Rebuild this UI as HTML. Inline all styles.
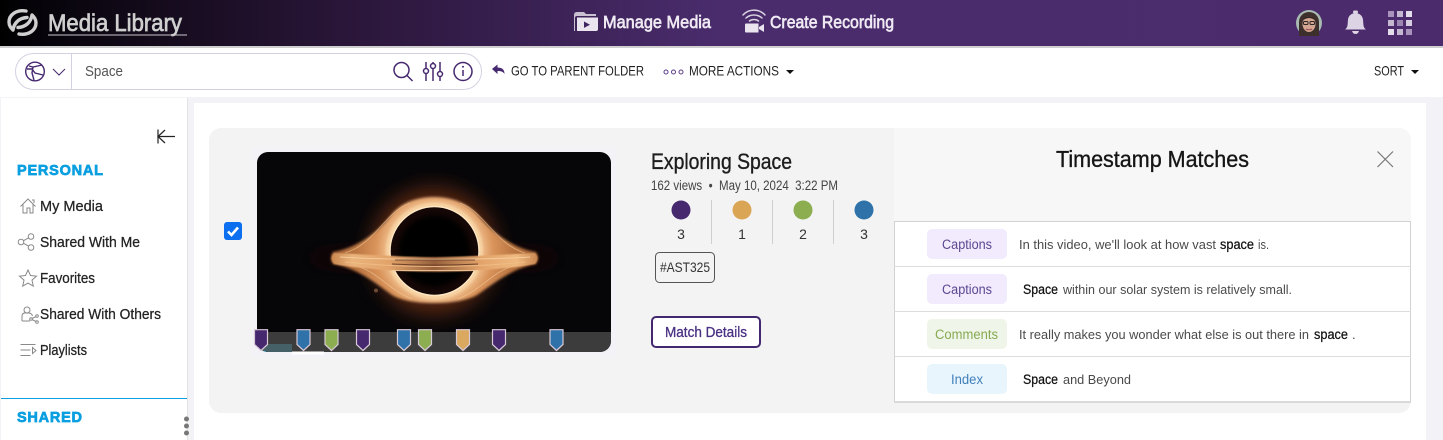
<!DOCTYPE html>
<html lang="en"><head><meta charset="utf-8"><title>Media Library</title>
<style>
html,body{margin:0;padding:0;width:1443px;height:440px;overflow:hidden;background:#f3f3f7}
svg{display:block}
text{font-family:"Liberation Sans",sans-serif;white-space:pre}
</style></head><body>
<svg xmlns="http://www.w3.org/2000/svg" width="1443" height="440" viewBox="0 0 1443 440">
<defs>
<linearGradient id="hd" x1="0" x2="1" y1="0" y2="0"><stop offset="0" stop-color="#000"/><stop offset=".02" stop-color="#050308"/><stop offset=".24" stop-color="#2a1639"/><stop offset=".5" stop-color="#4a2c6d"/><stop offset="1" stop-color="#4b2b6c"/></linearGradient>
<clipPath id="th"><rect x="257" y="152" width="354" height="200" rx="11"/></clipPath>
<filter id="b1" x="-30%" y="-30%" width="160%" height="160%"><feGaussianBlur stdDeviation="1.300"/></filter>
<filter id="b05" x="-10%" y="-50%" width="120%" height="200%"><feGaussianBlur stdDeviation=".6"/></filter>
<filter id="b2" x="-30%" y="-50%" width="160%" height="200%"><feGaussianBlur stdDeviation="3"/></filter>
<filter id="b8" x="-50%" y="-50%" width="200%" height="200%"><feGaussianBlur stdDeviation="10"/></filter>
<linearGradient id="disk" x1="0" x2="1" y1="0" y2="0"><stop offset="0" stop-color="#c98750"/><stop offset=".1" stop-color="#eab47c"/><stop offset=".28" stop-color="#e2a36a"/><stop offset=".5" stop-color="#96603c"/><stop offset=".72" stop-color="#e2a36a"/><stop offset=".9" stop-color="#eeb980"/><stop offset="1" stop-color="#c98750"/></linearGradient>
<radialGradient id="halo" gradientUnits="userSpaceOnUse" cx="434.500" cy="251" r="105"><stop offset=".42" stop-color="#f5c898"/><stop offset=".56" stop-color="#d9935a"/><stop offset=".75" stop-color="#bb7642"/><stop offset="1" stop-color="#a56236"/></radialGradient>
<path id="mk" d="M-6.500-10.300H6.500V4.500L0 10.500-6.500 4.500Z" stroke="#d8c9d6" stroke-width="1.200"/>
</defs>

<!-- backgrounds -->
<rect width="1443" height="440" fill="#f3f3f7"/>
<rect width="1443" height="46" fill="url(#hd)"/>
<rect y="46" width="1443" height="2" fill="#cfcfcf"/>
<rect y="48" width="1443" height="49" fill="#fff"/>
<rect x="1" y="98" width="186" height="342" fill="#fff"/>
<rect x="187" y="98" width="1" height="342" fill="#e2e2e2"/>
<rect x="194" y="103" width="1232" height="337" fill="#fff"/>

<!-- header -->
<g fill="none" stroke="#cfcfcf" stroke-width="3.400" stroke-linecap="round" stroke-linejoin="round">
<path d="M26 11C16 9.500 9 15 9 22 9 26 11 28 13 30 14 23 19 18 27 17.500"/>
<path d="M19 34C29 35.500 36 30 36 23 36 19 34 17 32 15 31 22 26 27 18 27.500"/>
</g>
<text x="48" y="31" font-size="24" fill="#cfcfcf" stroke="#cfcfcf" stroke-width=".7" textLength="134" lengthAdjust="spacingAndGlyphs">Media Library</text>
<rect x="48" y="34.500" width="139" height="1" fill="#c9c6cc"/>

<path d="M574 31V15q0-3 3-3h7l2 2h10v2h-19q-2 0-2 2v13z" fill="#c9c1d1"/>
<path d="M577 17.500h21V29q0 2-2 2h-19z" fill="#e9e4ee"/>
<path d="M584 21.500l6 3.200-6 3.200z" fill="#3f2560"/>
<text x="603" y="28" font-size="17.500" fill="#efeaf3" stroke="#efeaf3" stroke-width=".65" textLength="108" lengthAdjust="spacingAndGlyphs">Manage Media</text>
<g fill="none" stroke="#d9d2e0" stroke-width="1.500" stroke-linecap="round">
<path d="M743 15c6-6.500 16-6.500 22 0"/><path d="M746 18c4.500-4 11.500-4 16 0"/><path d="M749.500 21c2.500-2 6.500-2 9 0"/>
</g>
<path d="M746 23.500h12.500v9H746q-1 0-1-1v-7q0-1 1-1zM759 27l5-3v8l-5-3z" fill="#e9e4ee"/>
<text x="770" y="28" font-size="17.500" fill="#efeaf3" stroke="#efeaf3" stroke-width=".65" textLength="124" lengthAdjust="spacingAndGlyphs">Create Recording</text>

<circle cx="1309" cy="23" r="13" fill="#a9bab2"/>
<path d="M1299 36V22a10 10 0 0 1 20 0v14z" fill="#3d302c"/>
<ellipse cx="1309" cy="24" rx="6.500" ry="8" fill="#d4a591"/>
<path d="M1302 21q7-6 14 0-3-5-7-5t-7 5z" fill="#2f2422"/>
<g fill="none" stroke="#2c2628" stroke-width="1"><rect x="1303.500" y="21.500" width="4.500" height="3" rx="1"/><rect x="1310" y="21.500" width="4.500" height="3" rx="1"/></g>
<path d="M1306 29q3 1.500 6 0" stroke="#9c4d55" fill="none"/>
<path d="M1345 29.500c3-2 2.500-5 3-10 .5-4 4-6.500 7.500-6.500s7 2.500 7.500 6.500c.5 5 0 8 3 10z" fill="#dcd3e4"/>
<rect x="1353" y="10.500" width="5" height="3" rx="1.500" fill="#dcd3e4"/>
<path d="M1352 31h7q-1 3-3.500 3t-3.500-3z" fill="#dcd3e4"/>
<g>
<rect x="1388" y="11" width="6" height="6" fill="#a793bb"/><rect x="1397" y="11" width="6" height="6" fill="#c4b7d0"/><rect x="1406" y="11" width="6" height="6" fill="#e4deea"/>
<rect x="1388" y="20" width="6" height="6" fill="#c4b7d0"/><rect x="1397" y="20" width="6" height="6" fill="#9a86b0"/><rect x="1406" y="20" width="6" height="6" fill="#d6cde0"/>
<rect x="1388" y="29" width="6" height="6" fill="#e4deea"/><rect x="1397" y="29" width="6" height="6" fill="#c4b7d0"/><rect x="1406" y="29" width="6" height="6" fill="#a793bb"/>
</g>

<!-- search -->
<rect x="15.500" y="53.500" width="466" height="36" rx="18" fill="#fff" stroke="#d6d1e2"/>
<rect x="71" y="54" width="1" height="35" fill="#d6d1e2"/>
<g fill="none" stroke="#46296f" stroke-width="1.400">
<circle cx="35" cy="71.500" r="9.300"/>
<path d="M42 65l-9 2-4-1M27 69l5 0 3 4 8 2M33 67l-1 6 2 7"/>
</g>
<path d="M53 69l6 6 6-6" fill="none" stroke="#46296f" stroke-width="1"/>
<text x="85" y="76" font-size="14.500" fill="#555" textLength="38" lengthAdjust="spacingAndGlyphs">Space</text>
<g fill="none" stroke="#46296f" stroke-width="1.500">
<circle cx="401.500" cy="70" r="7.500"/><path d="M407 75.500l5.500 5.500"/>
<path d="M426 62v6M426 74v7M433 62v1M433 69v12M440 62v9M440 77v4"/>
<circle cx="426" cy="71" r="2.500"/><circle cx="433" cy="66" r="2.500"/><circle cx="440" cy="74" r="2.500"/>
<circle cx="463" cy="71.500" r="9"/>
</g>
<path d="M463 70v6" stroke="#46296f" stroke-width="1.500"/><circle cx="463" cy="66.800" r="1" fill="#46296f"/>

<path d="M492 69l5.500-4.500v3c4 0 7 1.500 7 6.500-1.500-2.500-3.500-3-7-3v3z" fill="#46296f"/>
<text x="511" y="75.500" font-size="14" fill="#222" textLength="133" lengthAdjust="spacingAndGlyphs">GO TO PARENT FOLDER</text>
<g fill="none" stroke="#5c3f8c" stroke-width="1"><circle cx="666" cy="72" r="2"/><circle cx="673.500" cy="72" r="2"/><circle cx="681" cy="72" r="2"/></g>
<text x="689" y="75.500" font-size="14" fill="#222" textLength="90" lengthAdjust="spacingAndGlyphs">MORE ACTIONS</text>
<path d="M786 70h8l-4 4z" fill="#111"/>
<text x="1374" y="75.500" font-size="14" fill="#222" textLength="30" lengthAdjust="spacingAndGlyphs">SORT</text>
<path d="M1411 70h8l-4 4z" fill="#111"/>

<!-- sidebar -->
<path d="M158 129.500v14M175 136.500h-17M165 130l-7 6.500 7 6.500" fill="none" stroke="#222" stroke-width="1.200"/>
<text x="17" y="175" font-size="14.500" font-weight="700" fill="#0a9fe0" stroke="#0a9fe0" stroke-width=".7" textLength="86" lengthAdjust="spacing">PERSONAL</text>
<g fill="none" stroke="#8a8a8a" stroke-width="1">
<path d="M20.500 206.500L28 199l7.500 7.500M23 204.500V213h4v-5h3v5h3v-8.500M32 200h2v3"/>
<circle cx="21" cy="242" r="2.800"/><circle cx="31" cy="236.500" r="2.800"/><circle cx="31" cy="247.500" r="2.800"/><path d="M23.500 240.700l5-2.800M23.500 243.300l5 2.800"/>
<path d="M28 270l2.500 5.500 6 .6-4.500 4 1.300 6-5.300-3-5.300 3 1.300-6-4.500-4 6-.6z"/>
<circle cx="27" cy="310" r="3"/><path d="M22 321v-5q0-2.500 2.500-3h4.500q3 .5 3.500 3M22 321h8"/><circle cx="31" cy="319" r="1.300"/><circle cx="37" cy="316" r="1.300"/><circle cx="37" cy="322" r="1.300"/><path d="M32 318.500l4-2M32 319.500l4 2"/>
<path d="M20.500 344.500h15M20.500 350h10M20.500 355.500h10M32.500 347.500l3.500 3-3.500 3z"/>
</g>
<g font-size="14.500" fill="#222" stroke="#222" stroke-width=".25">
<text x="40" y="211" textLength="63" lengthAdjust="spacingAndGlyphs">My Media</text>
<text x="40" y="247" textLength="100" lengthAdjust="spacingAndGlyphs">Shared With Me</text>
<text x="40" y="283" textLength="55" lengthAdjust="spacingAndGlyphs">Favorites</text>
<text x="40" y="319" textLength="121" lengthAdjust="spacingAndGlyphs">Shared With Others</text>
<text x="40" y="355" textLength="47" lengthAdjust="spacingAndGlyphs">Playlists</text>
</g>
<rect x="1" y="398" width="186" height="1" fill="#0a9fe0"/>
<text x="17" y="422" font-size="14.500" font-weight="700" fill="#0a9fe0" stroke="#0a9fe0" stroke-width=".7" textLength="65" lengthAdjust="spacing">SHARED</text>
<circle cx="186.500" cy="419" r="2.500" fill="#777"/><circle cx="186.500" cy="426" r="2.500" fill="#777"/><circle cx="186.500" cy="433" r="2.500" fill="#777"/>

<!-- card -->
<rect x="209" y="128" width="1202" height="285" rx="12" fill="#f3f3f3"/>
<path d="M894 128h505a12 12 0 0 1 12 12v81H894z" fill="#f7f7f7"/>
<rect x="224" y="222" width="18" height="18" rx="3" fill="#0b6ff0"/>
<path d="M228 231.500l3.500 3.500 6.500-7.500" fill="none" stroke="#fff" stroke-width="2.600"/>

<!-- thumbnail -->
<rect x="252" y="147" width="364" height="210" fill="#f3f3f7"/>
<g clip-path="url(#th)">
<rect x="257" y="152" width="354" height="200" fill="#060609"/>
<ellipse cx="434" cy="258" rx="130" ry="9" fill="#1c0c0a" filter="url(#b8)"/>
<circle cx="434" cy="251" r="64" fill="#7a3418" opacity=".7" filter="url(#b8)"/>
<path d="M333 252C358 248 378 232 392 214 402 202 418 197 434 197S466 202 477 214C492 232 512 248 536 252Q540 258 536 264C512 268 492 285 477 295 466 301 450 303 434 303S402 301 392 295C378 285 358 268 333 264Q329 258 333 252Z" fill="url(#halo)" filter="url(#b1)"/>
<g fill="none" stroke="#f5cd9e" stroke-width=".9" opacity=".6"><path d="M345 253C375 244 385 212 410 203"/><path d="M525 253C495 244 485 212 460 203"/><path d="M350 264C378 270 385 288 412 299"/><path d="M520 264C492 270 485 288 458 299"/></g>
<circle cx="434.500" cy="251" r="46.500" fill="none" stroke="#f8d5a6" stroke-width="3.500" filter="url(#b1)"/>
<circle cx="434.500" cy="251" r="44.500" fill="#150706"/>
<circle cx="434.500" cy="251" r="36" fill="#060304" filter="url(#b2)"/>
<circle cx="434.500" cy="251" r="44.500" fill="none" stroke="#ffe6c2" stroke-width="1.500"/>
<path d="M334 253C360 254 400 257 434 257S510 254 535 253Q540 258 535 264C515 268 470 272 434 272S355 268 334 264Q329 258 334 253Z" fill="url(#disk)" filter="url(#b05)"/>
<g fill="none" stroke-width="1" opacity=".85"><path d="M340 257C380 260 490 260 530 257" stroke="#f8d2a4"/><path d="M392 264C420 265.500 450 265.500 478 264" stroke="#5e3320"/><path d="M345 262C400 268 470 268 525 262" stroke="#f0bf88"/><path d="M392 270.500H478" stroke="#f3cd9f"/><path d="M395 260H475" stroke="#6d3d26"/></g>
<circle cx="376" cy="290.500" r="2" fill="#6b4a35"/>
<rect x="257" y="332" width="354" height="20" fill="#3c3c3c"/>
<rect x="262" y="344" width="30" height="8" fill="#466068"/>
<rect x="262" y="351" width="4" height="1" fill="#1c9fd0"/>
</g>
<rect x="292" y="351.500" width="32" height="3" fill="#fff"/>
<g>
<use href="#mk" x="261" y="340" fill="#46286f"/>
<use href="#mk" x="303.500" y="340" fill="#2f72a9"/>
<use href="#mk" x="331.500" y="340" fill="#8cae50"/>
<use href="#mk" x="363" y="340" fill="#46286f"/>
<use href="#mk" x="404" y="340" fill="#2f72a9"/>
<use href="#mk" x="425" y="340" fill="#8cae50"/>
<use href="#mk" x="463" y="340" fill="#dba85f"/>
<use href="#mk" x="499" y="340" fill="#46286f"/>
<use href="#mk" x="556.500" y="340" fill="#2f72a9"/>
</g>

<!-- details -->
<text x="651" y="169" font-size="22" fill="#1d1d1d" stroke="#1d1d1d" stroke-width=".35" textLength="141" lengthAdjust="spacingAndGlyphs">Exploring Space</text>
<text x="651" y="190" font-size="13.500" fill="#444" textLength="187" lengthAdjust="spacingAndGlyphs">162 views  •  May 10, 2024  3:22 PM</text>
<circle cx="681" cy="210" r="9.500" fill="#46286f"/><circle cx="742" cy="210" r="9.500" fill="#dba556"/><circle cx="803" cy="210" r="9.500" fill="#8cae50"/><circle cx="864" cy="210" r="9.500" fill="#2f72a9"/>
<g font-size="14" fill="#333" text-anchor="middle"><text x="681" y="239">3</text><text x="742" y="239">1</text><text x="803" y="239">2</text><text x="864" y="239">3</text></g>
<g fill="#cfcfcf"><rect x="711" y="200" width="1" height="44"/><rect x="772" y="200" width="1" height="44"/><rect x="833" y="200" width="1" height="44"/></g>
<rect x="655.500" y="252.500" width="59" height="30" rx="4" fill="none" stroke="#555"/>
<text x="660" y="272" font-size="13.500" fill="#333" textLength="50" lengthAdjust="spacingAndGlyphs">#AST325</text>
<rect x="652" y="317" width="108" height="30" rx="4" fill="#fff" stroke="#43286f" stroke-width="2"/>
<text x="665" y="337" font-size="14.500" fill="#4b3183" stroke="#4b3183" stroke-width=".3" textLength="82" lengthAdjust="spacingAndGlyphs">Match Details</text>

<!-- matches -->
<text x="1056" y="167" font-size="23" fill="#151515" stroke="#151515" stroke-width=".35" textLength="193" lengthAdjust="spacingAndGlyphs">Timestamp Matches</text>
<path d="M1377.500 151.500l15.500 15.500M1393 151.500L1377.500 167" stroke="#777" stroke-width="1.200" fill="none"/>
<rect x="894.500" y="221.500" width="516" height="180.500" fill="#fff" stroke="#d2d2d2"/>
<rect x="894" y="266" width="517" height="1" fill="#dcdcdc"/><rect x="894" y="311" width="517" height="1" fill="#dcdcdc"/><rect x="894" y="356" width="517" height="1" fill="#dcdcdc"/><rect x="894" y="401" width="517" height="2" fill="#d9d9d9"/>
<rect x="927" y="229" width="80" height="30" rx="5" fill="#f1ebfd"/>
<rect x="927" y="274" width="80" height="30" rx="5" fill="#f1ebfd"/>
<rect x="927" y="319" width="80" height="30" rx="5" fill="#f0f5e9"/>
<rect x="927" y="364" width="80" height="30" rx="5" fill="#e9f5fc"/>
<g font-size="13.500">
<text x="942" y="249" fill="#5c4691" textLength="50" lengthAdjust="spacingAndGlyphs">Captions</text>
<text x="942" y="294" fill="#5c4691" textLength="50" lengthAdjust="spacingAndGlyphs">Captions</text>
<text x="935" y="339" fill="#86aa52" textLength="63" lengthAdjust="spacingAndGlyphs">Comments</text>
<text x="951" y="384" fill="#3f80bb" textLength="32" lengthAdjust="spacingAndGlyphs">Index</text>
</g>
<g font-size="13" fill="#4a4a4a">
<text x="1019" y="249" textLength="197" lengthAdjust="spacingAndGlyphs">In this video, we'll look at how vast</text>
<text x="1258" y="249" textLength="11" lengthAdjust="spacingAndGlyphs">is.</text>
<text x="1063" y="294" textLength="229" lengthAdjust="spacingAndGlyphs">within our solar system is relatively small.</text>
<text x="1019" y="339" textLength="290" lengthAdjust="spacingAndGlyphs">It really makes you wonder what else is out there in</text>
<text x="1352" y="339">.</text>
<text x="1063" y="384" textLength="68" lengthAdjust="spacingAndGlyphs">and Beyond</text>
</g>
<g font-size="13.500" fill="#111" stroke="#111" stroke-width=".25">
<text x="1220" y="249" textLength="34" lengthAdjust="spacingAndGlyphs">space</text>
<text x="1023" y="294" textLength="35" lengthAdjust="spacingAndGlyphs">Space</text>
<text x="1314" y="339" textLength="34" lengthAdjust="spacingAndGlyphs">space</text>
<text x="1023" y="384" textLength="35" lengthAdjust="spacingAndGlyphs">Space</text>
</g>
</svg>
</body></html>
